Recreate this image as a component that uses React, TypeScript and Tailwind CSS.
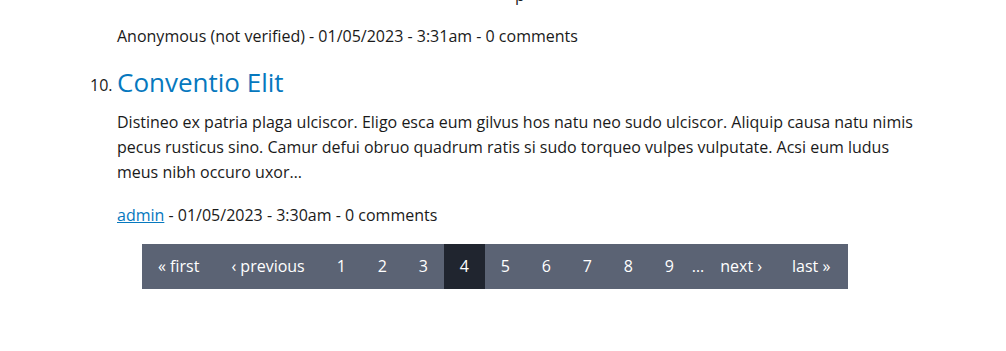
import React from "react";

export default function App() {
  const pages = ["1", "2", "3", "4", "5", "6", "7", "8", "9"];
  return (
    <div
      className="w-[1006px] h-[351px] bg-white overflow-hidden text-[16px] text-[#1a1a1a]"
      style={{ fontFamily: '"Open Sans", sans-serif' }}
    >
      <div className="relative h-[12px]">
        <span className="absolute left-[515px] top-[-13px] text-[16px] leading-[16px]">p</span>
      </div>
      <div className="pl-[117px] pr-[88px]">
        <p className="mt-[12px] leading-[25px]">
          Anonymous (not verified) - 01/05/2023 - 3:31am - 0 comments
        </p>
        <div className="relative mt-[16px]">
          <span className="absolute left-[-27px] top-[8px] text-[16px] leading-[25px]">10.</span>
          <h2 className="text-[26px] leading-[34px] text-[#0678be]">Conventio Elit</h2>
        </div>
        <p className="mt-[11px] leading-[25px]">
          Distineo ex patria plaga ulciscor. Eligo esca eum gilvus hos natu neo sudo ulciscor. Aliquip causa natu nimis
          pecus rusticus sino. Camur defui obruo quadrum ratis si sudo torqueo vulpes vulputate. Acsi eum ludus meus
          nibh occuro uxor…
        </p>
        <p className="mt-[18px] leading-[25px]">
          <a className="text-[#0678be] underline">admin</a> - 01/05/2023 - 3:30am - 0 comments
        </p>
      </div>
      <div className="mt-[16px] ml-[142px] flex w-[706px] h-[45px] bg-[#5b6374] text-white items-stretch">
        <span className="flex items-center px-[16px] pb-[1px]">« first</span>
        <span className="flex items-center px-[16px] pb-[1px]">‹ previous</span>
        {pages.map((p) => (
          <span
            key={p}
            className={
              p === "4"
                ? "flex items-center justify-center w-[41px] pb-[1px] bg-[#20252f]"
                : "flex items-center justify-center w-[41px] pb-[1px]"
            }
          >
            {p}
          </span>
        ))}
        <span className="flex items-center px-[2px] pb-[1px]">…</span>
        <span className="flex items-center px-[14px] pb-[1px]">next ›</span>
        <span className="flex items-center px-[16px] pb-[1px]">last »</span>
      </div>
    </div>
  );
}
